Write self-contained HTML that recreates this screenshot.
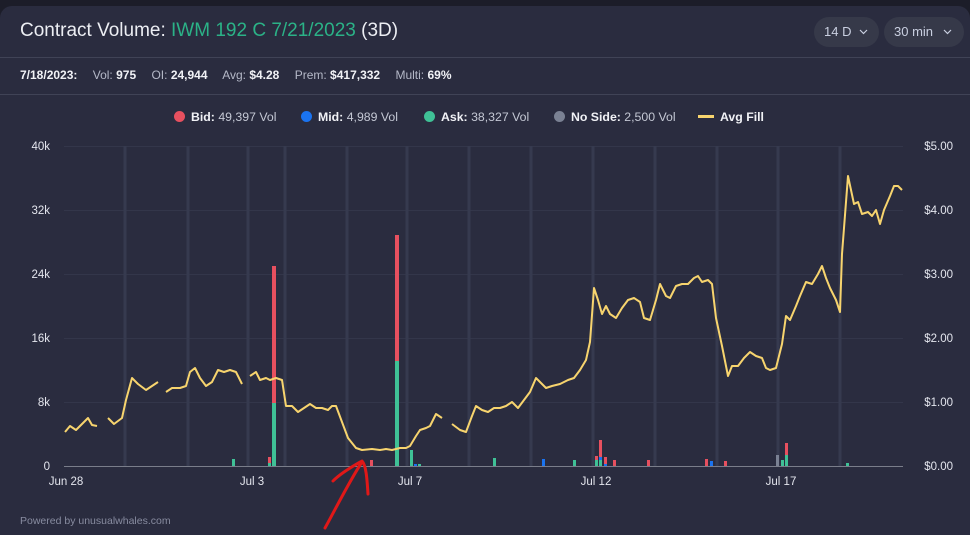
<!DOCTYPE html>
<html><head><meta charset="utf-8"><style>
body{margin:0;width:970px;height:535px;background:#1c1d29;font-family:"Liberation Sans",sans-serif;overflow:hidden;position:relative}
.card{position:absolute;left:0;top:6px;width:970px;height:529px;background:#2a2c3f;border-radius:12px 12px 0 0}
.t{position:absolute;left:20px;top:20px;font-size:19px;color:#eceef3}
.g{color:#2bb287}
.btn{position:absolute;top:17px;height:30px;border-radius:15px;background:#363949;color:#c9cfe0;font-size:13px;line-height:30px;padding-left:10px;box-sizing:border-box}
.btn svg{position:absolute;top:12px}
.hr{position:absolute;left:0;width:970px;height:1px;background:#404356}
.stats{position:absolute;left:20px;top:68px;font-size:12px;color:#b5b9c8}
.stats b{color:#f1f2f6}
.stats span{margin-right:12px}
.leg{position:absolute;top:110px;font-size:12.3px;color:#c4c8d4}
.leg b{color:#f1f2f6}
.dot{display:inline-block;width:11px;height:11px;border-radius:50%;vertical-align:-1px;margin-right:6px}
svg.c{position:absolute;left:0;top:0}
.pw{position:absolute;left:20px;top:515px;font-size:10.5px;color:#888ca0}
</style></head><body>
<div class="card"></div>
<div class="t">Contract Volume: <span class="g">IWM 192 C 7/21/2023</span> (3D)</div>
<div class="btn" style="left:814px;width:65px">14 D <svg style="left:45px" width="9" height="6"><path d="M1 1 L4.5 4.5 L8 1" fill="none" stroke="#c9cfe0" stroke-width="1.2"/></svg></div>
<div class="btn" style="left:884px;width:80px">30 min <svg style="left:59px" width="9" height="6"><path d="M1 1 L4.5 4.5 L8 1" fill="none" stroke="#c9cfe0" stroke-width="1.2"/></svg></div>
<div class="hr" style="top:57px"></div>
<div class="stats"><span><b>7/18/2023:</b></span> <span>Vol: <b>975</b></span> <span>OI: <b>24,944</b></span> <span>Avg: <b>$4.28</b></span> <span>Prem: <b>$417,332</b></span> <span>Multi: <b>69%</b></span></div>
<div class="hr" style="top:94px"></div>
<div class="leg" style="left:174px"><span class="dot" style="background:#e7505f"></span><b>Bid:</b> 49,397 Vol</div>
<div class="leg" style="left:301px"><span class="dot" style="background:#1a73f0"></span><b>Mid:</b> 4,989 Vol</div>
<div class="leg" style="left:424px"><span class="dot" style="background:#3fc196"></span><b>Ask:</b> 38,327 Vol</div>
<div class="leg" style="left:554px"><span class="dot" style="background:#7a8193"></span><b>No Side:</b> 2,500 Vol</div>
<div class="leg" style="left:698px"><span style="display:inline-block;width:16px;height:3px;background:#f7d46e;vertical-align:3px;margin-right:6px"></span><b>Avg Fill</b></div>
<svg class="c" width="970" height="535" font-family="Liberation Sans, sans-serif" font-size="11.5" fill="#e4e6ee">
<g stroke="#33364a" stroke-width="1">
<line x1="64" y1="146.5" x2="903" y2="146.5"/><line x1="64" y1="210.5" x2="903" y2="210.5"/><line x1="64" y1="274.5" x2="903" y2="274.5"/><line x1="64" y1="338.5" x2="903" y2="338.5"/><line x1="64" y1="402.5" x2="903" y2="402.5"/>
</g>
<g stroke="#363a4f" stroke-width="3">
<line x1="125" y1="146" x2="125" y2="466"/><line x1="188" y1="146" x2="188" y2="466"/><line x1="248" y1="146" x2="248" y2="466"/><line x1="285" y1="146" x2="285" y2="466"/><line x1="347" y1="146" x2="347" y2="466"/><line x1="407" y1="146" x2="407" y2="466"/><line x1="469" y1="146" x2="469" y2="466"/><line x1="531" y1="146" x2="531" y2="466"/><line x1="593" y1="146" x2="593" y2="466"/><line x1="655" y1="146" x2="655" y2="466"/><line x1="717" y1="146" x2="717" y2="466"/><line x1="778" y1="146" x2="778" y2="466"/><line x1="840" y1="146" x2="840" y2="466"/>
</g>
<g text-anchor="end"><text x="50" y="150">40k</text><text x="50" y="214">32k</text><text x="50" y="278">24k</text><text x="50" y="342">16k</text><text x="50" y="406">8k</text><text x="50" y="470">0</text></g>
<g text-anchor="end"><text x="953" y="150">$5.00</text><text x="953" y="214">$4.00</text><text x="953" y="278">$3.00</text><text x="953" y="342">$2.00</text><text x="953" y="406">$1.00</text><text x="953" y="470">$0.00</text></g>
<g text-anchor="middle"><text x="66" y="485">Jun 28</text><text x="252" y="485">Jul 3</text><text x="410" y="485">Jul 7</text><text x="596" y="485">Jul 12</text><text x="781" y="485">Jul 17</text></g>
<g>
<rect x="272" y="266" width="4" height="137" fill="#e7505f"/><rect x="272" y="403" width="4" height="63" fill="#3fc196"/>
<rect x="395" y="235" width="4" height="126" fill="#e7505f"/><rect x="395" y="361" width="4" height="105" fill="#3fc196"/>
<rect x="268" y="457" width="3" height="6" fill="#e7505f"/><rect x="268" y="463" width="3" height="3" fill="#3fc196"/>
<rect x="232" y="459" width="3" height="7" fill="#3fc196"/><rect x="370" y="460" width="3" height="6" fill="#e7505f"/>
<rect x="410" y="450" width="3" height="16" fill="#3fc196"/><rect x="414" y="464" width="3" height="2" fill="#1a73f0"/><rect x="418" y="464" width="3" height="2" fill="#3fc196"/>
<rect x="493" y="458" width="3" height="8" fill="#3fc196"/><rect x="542" y="459" width="3" height="7" fill="#1a73f0"/>
<rect x="573" y="460" width="3" height="6" fill="#3fc196"/><rect x="595" y="456" width="3" height="10" fill="#e7505f"/>
<rect x="595" y="460" width="3" height="6" fill="#3fc196"/><rect x="599" y="440" width="3" height="17" fill="#e7505f"/><rect x="599" y="457" width="3" height="3" fill="#1a73f0"/><rect x="599" y="460" width="3" height="6" fill="#3fc196"/>
<rect x="604" y="457" width="3" height="7" fill="#e7505f"/><rect x="604" y="464" width="3" height="2" fill="#1a73f0"/>
<rect x="613" y="460" width="3" height="6" fill="#e7505f"/><rect x="647" y="460" width="3" height="6" fill="#e7505f"/>
<rect x="705" y="459" width="3" height="7" fill="#e7505f"/><rect x="710" y="461" width="3" height="5" fill="#1a73f0"/><rect x="724" y="461" width="3" height="5" fill="#e7505f"/>
<rect x="776" y="455" width="3" height="11" fill="#7a8193"/><rect x="781" y="460" width="3" height="6" fill="#3fc196"/><rect x="785" y="443" width="3" height="12" fill="#e7505f"/><rect x="785" y="455" width="3" height="11" fill="#3fc196"/>
<rect x="846" y="463" width="3" height="3" fill="#3fc196"/>
</g>
<line x1="64" y1="466.5" x2="903" y2="466.5" stroke="#7a7d8a" stroke-width="1"/>
<g fill="none" stroke="#f7d46e" stroke-width="2" stroke-linejoin="round">
<polyline points="65,432 70,426 76,430 82,424 88,418 92,425 97,426"/>
<polyline points="108,418 114,424 122,418 126,400 132,378 138,384 146,390 152,386 158,382"/>
<polyline points="166,392 172,388 180,388 186,386 190,372 195,368 200,378 206,386 212,382 218,370 224,372 230,370 236,372 242,384"/>
<polyline points="250,376 256,372 260,380 266,378 270,380 276,378 282,380 286,406 292,406 298,412 304,408 310,404 316,408 322,408 328,410 332,406 336,406 342,422 348,438 356,448 362,450 372,449 380,450 386,449 392,450 400,448 406,448 410,446 416,436 420,430 426,428 430,426 436,414 442,418"/>
<polyline points="452,424 460,430 466,432 472,416 476,406 482,410 488,412 494,408 500,408 506,406 512,402 518,408 524,400 530,392 536,378 540,382 546,388 552,386 560,384 568,380 574,378 580,370 586,360 590,342 594,288 598,300 602,314 606,306 610,314 616,318 622,308 628,300 634,298 640,302 644,318 650,320 656,300 660,284 666,296 670,298 676,286 682,284 688,284 694,278 698,276 702,282 708,280 712,284 716,318 722,346 728,376 732,366 738,366 744,358 750,352 756,356 762,358 766,368 770,370 776,368 782,344 786,316 790,320 796,306 800,296 806,282 812,284 818,274 822,266 826,278 830,288 836,300 840,312 842,254 848,176 854,204 858,202 862,214 868,212 872,216 876,210 880,224 884,210 890,196 894,186 898,186 902,190"/>
</g>
<g fill="none" stroke="#e01818" stroke-width="3" stroke-linecap="round" stroke-linejoin="round">
<path d="M325,528 C335,510 350,480 362,462"/>
<path d="M333,481 C342,472 355,465 362,461 C366,465 367,478 368,494"/>
</g>
</svg>
<div class="pw">Powered by unusualwhales.com</div>
</body></html>
